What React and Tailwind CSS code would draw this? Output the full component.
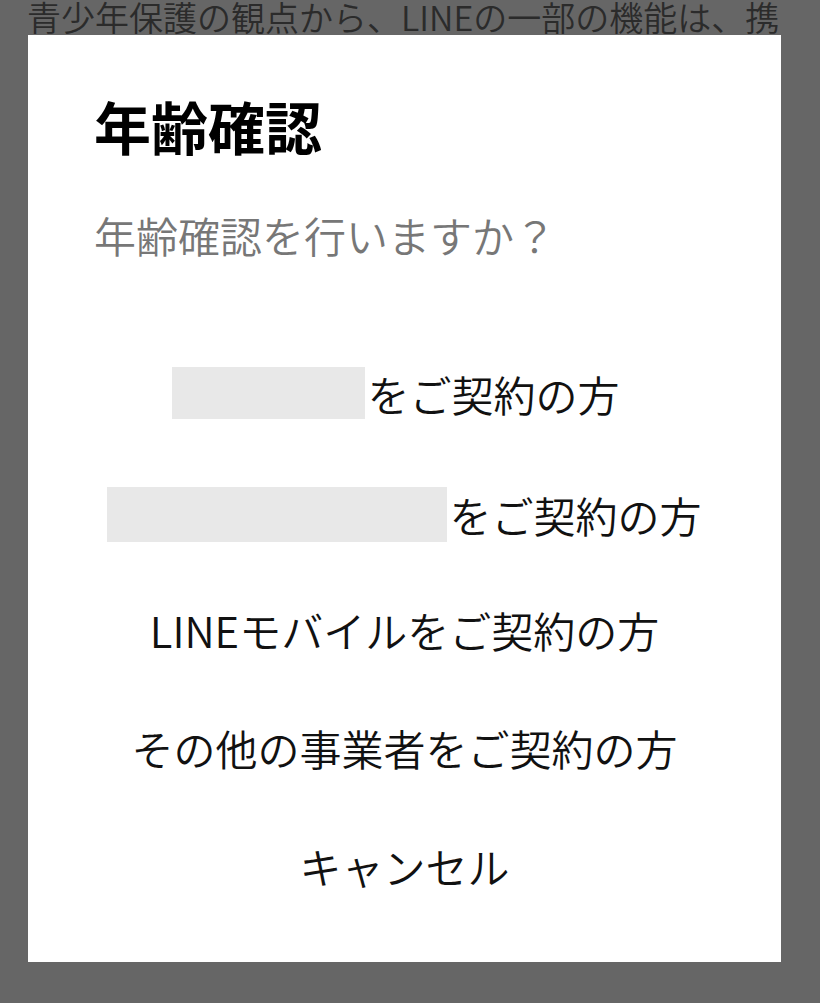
import React from 'react';

const options = [
  { redact: 'w-[193px] h-[52px]', text: 'をご契約の方', extra: 'pr-[17px]' },
  { redact: 'w-[340px] h-[55px]', text: 'をご契約の方', extra: 'pt-[6px]' },
  { text: 'LINEモバイルをご契約の方' },
  { text: 'その他の事業者をご契約の方' },
  { text: 'キャンセル' },
];

const AgeCheckDialog = () => {
  return (
    <div className="relative w-full h-[1003px] overflow-hidden bg-[#666666] font-['Noto_Sans_CJK_JP','Noto_Sans',sans-serif]">
      {/* Page behind the overlay */}
      <p className="pl-[27px] text-[34px] leading-[34px] font-[350] text-[#2b2b2b] whitespace-nowrap">
        青少年保護の観点から、LINEの一部の機能は、携
      </p>

      {/* Dialog */}
      <div className="absolute left-[28px] top-[35px] w-[753px] h-[927px] bg-white pt-[60px] pb-[38px]">
        <h1 className="pl-[66px] text-[57px] leading-[60px] font-bold text-black">年齢確認</h1>
        <p className="mt-[50px] pl-[66px] text-[42px] leading-[60px] font-[350] text-[#777777]">年齢確認を行いますか？</p>

        <div className="mt-[69px] flex flex-col">
          {options.map((opt, i) => (
            <button
              key={i}
              className={`h-[118px] flex items-center justify-center text-[42px] font-[350] text-[#111111] ${opt.extra || ''}`}
            >
              {opt.redact && <span className={`${opt.redact} bg-[#e8e8e8] mr-[2px]`} />}
              <span>{opt.text}</span>
            </button>
          ))}
        </div>
      </div>
    </div>
  );
};

export default AgeCheckDialog;
